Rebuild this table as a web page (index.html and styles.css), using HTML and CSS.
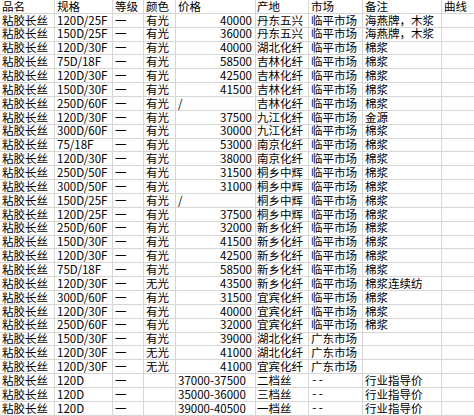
FILE: index.html
```html
<!DOCTYPE html>
<html lang="zh-CN">
<head>
<meta charset="utf-8">
<title>粘胶长丝价格</title>
<link rel="stylesheet" href="styles.css">
</head>
<body>
<table class="sheet">
  <colgroup>
    <col class="c-name"><col class="c-spec"><col class="c-grade"><col class="c-color"><col class="c-price"><col class="c-origin"><col class="c-market"><col class="c-note"><col class="c-curve">
  </colgroup>
  <tbody>
    <tr><td>品名</td><td>规格</td><td>等级</td><td>颜色</td><td>价格</td><td class="origin">产地</td><td>市场</td><td>备注</td><td>曲线</td></tr>
    <tr><td>粘胶长丝</td><td>120D/25F</td><td>一</td><td>有光</td><td class="num">40000</td><td class="origin">丹东五兴</td><td>临平市场</td><td>海燕牌，木浆</td><td></td></tr>
    <tr><td>粘胶长丝</td><td>150D/25F</td><td>一</td><td>有光</td><td class="num">36000</td><td class="origin">丹东五兴</td><td>临平市场</td><td>海燕牌，木浆</td><td></td></tr>
    <tr><td>粘胶长丝</td><td>120D/30F</td><td>一</td><td>有光</td><td class="num">40000</td><td class="origin">湖北化纤</td><td>临平市场</td><td>棉浆</td><td></td></tr>
    <tr><td>粘胶长丝</td><td>75D/18F</td><td>一</td><td>有光</td><td class="num">58500</td><td class="origin">吉林化纤</td><td>临平市场</td><td>棉浆</td><td></td></tr>
    <tr><td>粘胶长丝</td><td>120D/30F</td><td>一</td><td>有光</td><td class="num">42500</td><td class="origin">吉林化纤</td><td>临平市场</td><td>棉浆</td><td></td></tr>
    <tr><td>粘胶长丝</td><td>150D/30F</td><td>一</td><td>有光</td><td class="num">41500</td><td class="origin">吉林化纤</td><td>临平市场</td><td>棉浆</td><td></td></tr>
    <tr><td>粘胶长丝</td><td>250D/60F</td><td>一</td><td>有光</td><td>/</td><td class="origin">吉林化纤</td><td>临平市场</td><td>棉浆</td><td></td></tr>
    <tr><td>粘胶长丝</td><td>120D/30F</td><td>一</td><td>有光</td><td class="num">37500</td><td class="origin">九江化纤</td><td>临平市场</td><td>金源</td><td></td></tr>
    <tr><td>粘胶长丝</td><td>300D/60F</td><td>一</td><td>有光</td><td class="num">30000</td><td class="origin">九江化纤</td><td>临平市场</td><td>棉浆</td><td></td></tr>
    <tr><td>粘胶长丝</td><td>75/18F</td><td>一</td><td>有光</td><td class="num">53000</td><td class="origin">南京化纤</td><td>临平市场</td><td>棉浆</td><td></td></tr>
    <tr><td>粘胶长丝</td><td>120D/30F</td><td>一</td><td>有光</td><td class="num">38000</td><td class="origin">南京化纤</td><td>临平市场</td><td>棉浆</td><td></td></tr>
    <tr><td>粘胶长丝</td><td>250D/50F</td><td>一</td><td>有光</td><td class="num">31500</td><td class="origin">桐乡中辉</td><td>临平市场</td><td>棉浆</td><td></td></tr>
    <tr><td>粘胶长丝</td><td>300D/50F</td><td>一</td><td>有光</td><td class="num">31000</td><td class="origin">桐乡中辉</td><td>临平市场</td><td>棉浆</td><td></td></tr>
    <tr><td>粘胶长丝</td><td>150D/25F</td><td>一</td><td>有光</td><td>/</td><td class="origin">桐乡中辉</td><td>临平市场</td><td>棉浆</td><td></td></tr>
    <tr><td>粘胶长丝</td><td>120D/25F</td><td>一</td><td>有光</td><td class="num">37500</td><td class="origin">桐乡中辉</td><td>临平市场</td><td>棉浆</td><td></td></tr>
    <tr><td>粘胶长丝</td><td>250D/60F</td><td>一</td><td>有光</td><td class="num">32000</td><td class="origin">新乡化纤</td><td>临平市场</td><td>棉浆</td><td></td></tr>
    <tr><td>粘胶长丝</td><td>150D/30F</td><td>一</td><td>有光</td><td class="num">41500</td><td class="origin">新乡化纤</td><td>临平市场</td><td>棉浆</td><td></td></tr>
    <tr><td>粘胶长丝</td><td>120D/30F</td><td>一</td><td>有光</td><td class="num">42500</td><td class="origin">新乡化纤</td><td>临平市场</td><td>棉浆</td><td></td></tr>
    <tr><td>粘胶长丝</td><td>75D/18F</td><td>一</td><td>有光</td><td class="num">58500</td><td class="origin">新乡化纤</td><td>临平市场</td><td>棉浆</td><td></td></tr>
    <tr><td>粘胶长丝</td><td>120D/30F</td><td>一</td><td>无光</td><td class="num">43500</td><td class="origin">新乡化纤</td><td>临平市场</td><td>棉浆连续纺</td><td></td></tr>
    <tr><td>粘胶长丝</td><td>300D/60F</td><td>一</td><td>有光</td><td class="num">31500</td><td class="origin">宜宾化纤</td><td>临平市场</td><td>棉浆</td><td></td></tr>
    <tr><td>粘胶长丝</td><td>120D/30F</td><td>一</td><td>有光</td><td class="num">40000</td><td class="origin">宜宾化纤</td><td>临平市场</td><td>棉浆</td><td></td></tr>
    <tr><td>粘胶长丝</td><td>250D/60F</td><td>一</td><td>有光</td><td class="num">32000</td><td class="origin">宜宾化纤</td><td>临平市场</td><td>棉浆</td><td></td></tr>
    <tr><td>粘胶长丝</td><td>150D/30F</td><td>一</td><td>有光</td><td class="num">39000</td><td class="origin">湖北化纤</td><td>广东市场</td><td></td><td></td></tr>
    <tr><td>粘胶长丝</td><td>120D/30F</td><td>一</td><td>无光</td><td class="num">41000</td><td class="origin">湖北化纤</td><td>广东市场</td><td></td><td></td></tr>
    <tr><td>粘胶长丝</td><td>120D/30F</td><td>一</td><td>无光</td><td class="num">41000</td><td class="origin">宜宾化纤</td><td>广东市场</td><td></td><td></td></tr>
    <tr><td>粘胶长丝</td><td>120D</td><td>一</td><td></td><td>37000-37500</td><td class="origin">二档丝</td><td class="dash">--</td><td>行业指导价</td><td></td></tr>
    <tr><td>粘胶长丝</td><td>120D</td><td>一</td><td></td><td>35000-36000</td><td class="origin">三档丝</td><td class="dash">--</td><td>行业指导价</td><td></td></tr>
    <tr><td>粘胶长丝</td><td>120D</td><td>一</td><td></td><td>39000-40500</td><td class="origin">一档丝</td><td class="dash">--</td><td>行业指导价</td><td></td></tr>
  </tbody>
</table>
</body>
</html>
```
FILE: styles.css
```css
html, body {
  margin: 0;
  padding: 0;
  background: #ffffff;
  overflow: hidden;
}

.sheet {
  border-collapse: separate;
  border-spacing: 0;
  table-layout: fixed;
  width: 474px;
  font-family: "Noto Sans CJK SC", "Noto Sans", sans-serif;
  font-size: 11.5px;
  color: #000000;
}

.c-name { width: 55px; }
.c-spec { width: 58px; }
.c-grade { width: 31px; }
.c-color { width: 32px; }
.c-price { width: 80px; }
.c-origin { width: 53px; }
.c-market { width: 54px; }
.c-note { width: 79px; }
.c-curve { width: 32px; }

.sheet tr {
  height: 13.87px;
}

.sheet td {
  border-right: 1px solid #d6d6d6;
  border-bottom: 1px solid #d6d6d6;
  padding: 0 2px 1.2px 2px;
  line-height: 11px;
  white-space: nowrap;
  vertical-align: bottom;
  text-align: left;
}

.sheet td:last-child {
  border-right: none;
}

.sheet td.num {
  text-align: right;
  padding-right: 3px;
}

.sheet td.origin {
  padding-left: 1px;
}

.sheet td.dash {
  font-family: "Liberation Mono", monospace;
  font-size: 11px;
}
```
